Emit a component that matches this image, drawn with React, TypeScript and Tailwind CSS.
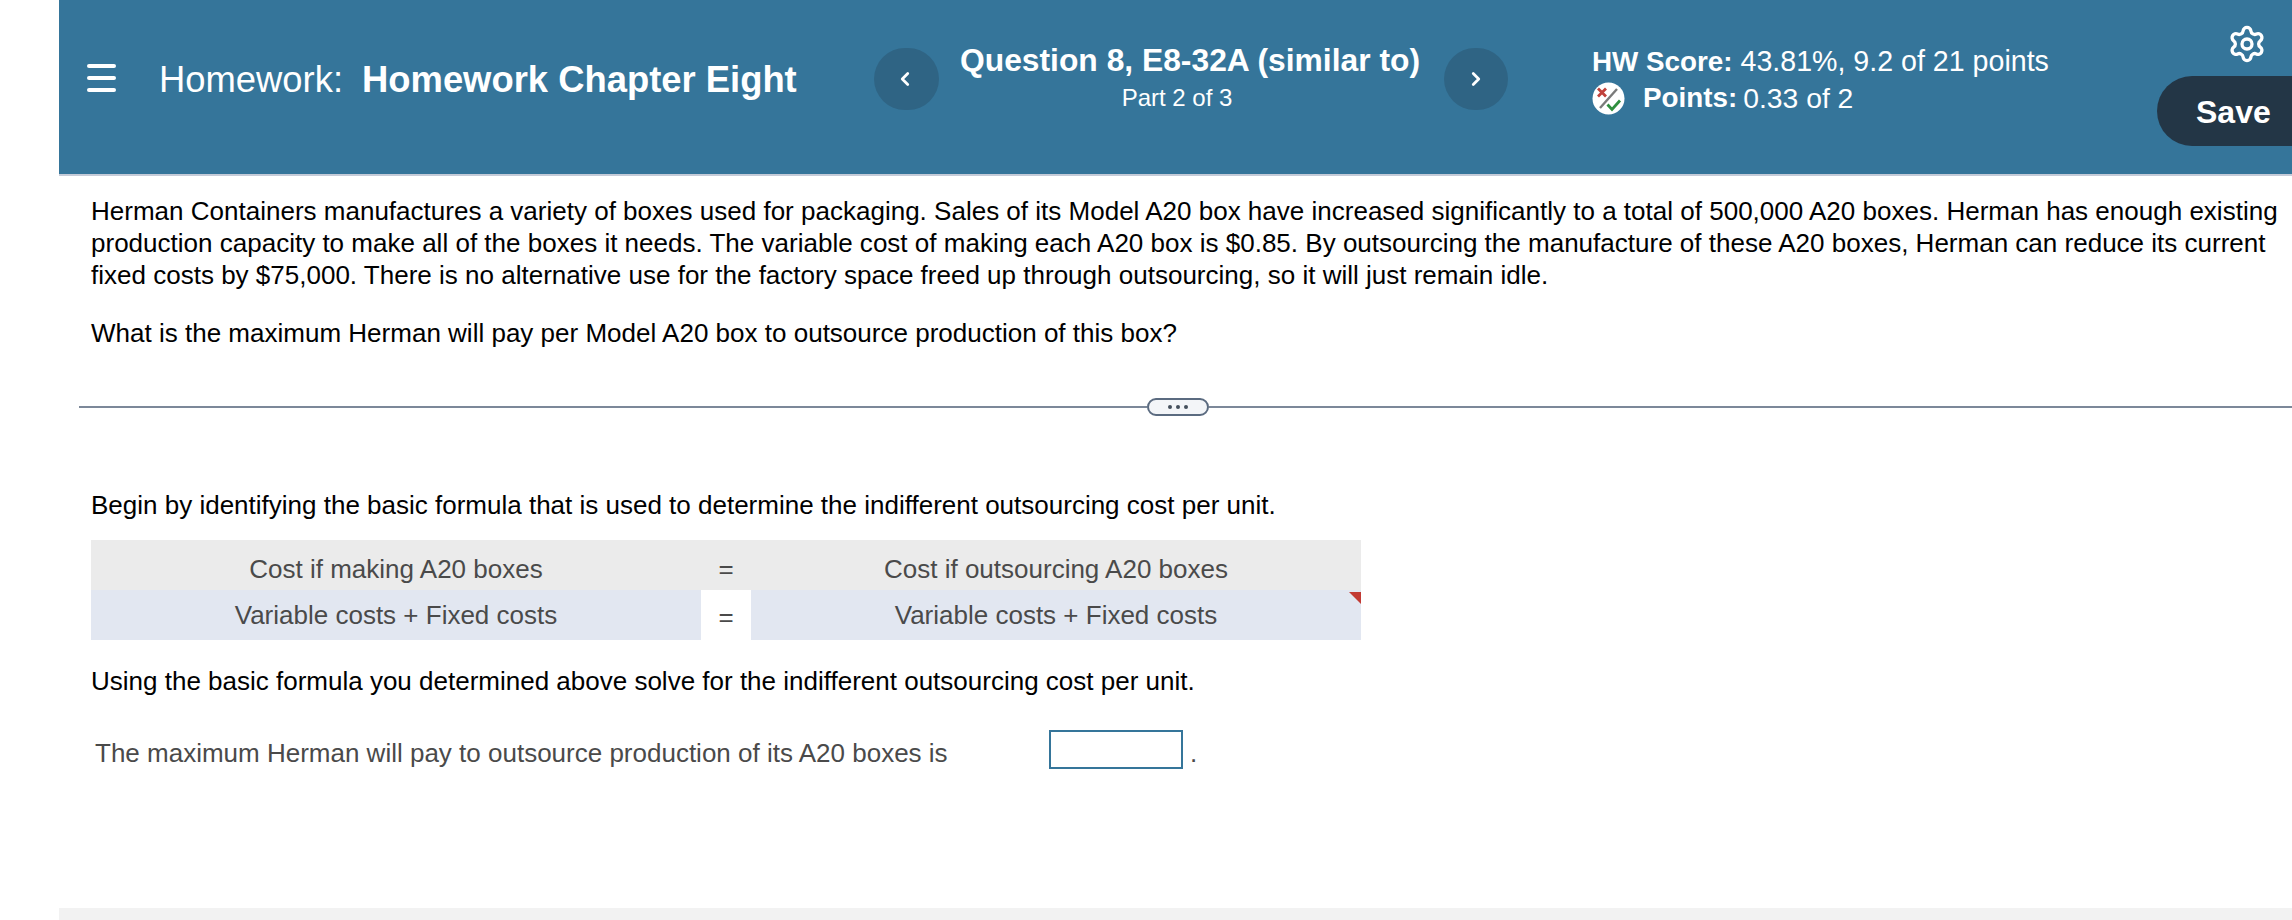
import { Settings, ChevronLeft, ChevronRight } from "lucide-react";

function ScoreIcon() {
  return (
    <svg width="33" height="33" viewBox="0 0 33 33" className="shrink-0">
      <circle cx="16.5" cy="16.5" r="16" fill="#ffffff" />
      <path d="M6 6.5l8 8M14 6.5l-8 8" stroke="#c0413b" strokeWidth="2.8" />
      <path d="M8 26L25 7" stroke="#7a7a7a" strokeWidth="2.4" />
      <path d="M15.5 22.5l4.5 5 8-9" stroke="#2f8f3e" strokeWidth="2.8" fill="none" />
    </svg>
  );
}

export default function App() {
  return (
    <div className="h-[920px] w-[2292px] overflow-hidden bg-white pl-[59px] font-['Liberation_Sans',Arial,sans-serif]">
      <div className="flex h-[920px] flex-col">
        {/* Header */}
        <header className="flex h-[176px] shrink-0 border-b-2 border-[#c5cbd8] bg-[#35759a] text-white">
          <div className="mt-[64px] flex h-[28px] w-[29px] ml-[28px] flex-col justify-between">
            <span className="h-[4px] rounded bg-white" />
            <span className="h-[4px] rounded bg-white" />
            <span className="h-[4px] rounded bg-white" />
          </div>
          <div className="ml-[43px] mt-[59px] h-[42px] w-[715px] text-[36.4px] leading-[42px]">
            Homework:<span className="ml-[19px] font-bold">Homework Chapter Eight</span>
          </div>
          <button className="mt-[48px] flex h-[62px] w-[65px] items-center justify-center rounded-full bg-[#2f6484]">
            <ChevronLeft size={22} strokeWidth={3} className="-ml-[3px]" />
          </button>
          <div className="mt-[40px] w-[505px] text-center">
            <div className="pr-[3px] text-[31.8px] font-bold leading-[40px]">Question 8, E8-32A (similar to)</div>
            <div className="mr-[29px] mt-[2px] text-[24px] leading-[32px]">Part 2 of 3</div>
          </div>
          <button className="mt-[48px] flex h-[62px] w-[64px] items-center justify-center rounded-full bg-[#2f6484]">
            <ChevronRight size={22} strokeWidth={3} />
          </button>
          <div className="ml-[84px] mt-[43px] w-[565px] text-[28.6px] leading-[36px]">
            <div>
              <span className="text-[27.8px] font-bold">HW Score:</span> 43.81%, 9.2 of 21 points
            </div>
            <div className="flex items-center">
              <ScoreIcon />
              <span className="ml-[18px] text-[27.8px] font-bold">Points:</span>
              <span className="ml-[6px] text-[28.3px]">0.33 of 2</span>
            </div>
          </div>
          <div className="flex flex-1 flex-col">
            <Settings size={40} strokeWidth={2} className="ml-[70px] mt-[24px] shrink-0" />
            <button className="mt-[12px] h-[70px] w-full rounded-l-[35px] bg-[#233646] pl-[39px] pt-[2px] text-left text-[32px] font-bold">
              Save
            </button>
          </div>
        </header>

        {/* Question text */}
        <div className="pl-[32px] pt-[19px] text-[26.03px] leading-[32px] text-black">
          <p className="whitespace-nowrap">
            Herman Containers manufactures a variety of boxes used for packaging. Sales of its Model A20 box have increased significantly to a total of 500,000 A20 boxes. Herman has enough existing
            <br />
            production capacity to make all of the boxes it needs. The variable cost of making each A20 box is $0.85. By outsourcing the manufacture of these A20 boxes, Herman can reduce its current
            <br />
            fixed costs by $75,000. There is no alternative use for the factory space freed up through outsourcing, so it will just remain idle.
          </p>
          <p className="mt-[26px]">What is the maximum Herman will pay per Model A20 box to outsource production of this box?</p>
        </div>

        {/* Divider */}
        <div className="ml-[20px] mt-[49px] flex h-[18px] items-center">
          <div className="h-[2px] w-[1068px] bg-[#7c8899]" />
          <div className="flex h-[18px] w-[62px] items-center justify-center gap-[4px] rounded-[9px] border-2 border-[#5b6b80] bg-[#f3f5f8]">
            <span className="h-[4px] w-[4px] rounded-full bg-[#444f5c]" />
            <span className="h-[4px] w-[4px] rounded-full bg-[#444f5c]" />
            <span className="h-[4px] w-[4px] rounded-full bg-[#444f5c]" />
          </div>
          <div className="h-[2px] flex-1 bg-[#7c8899]" />
        </div>

        {/* Formula */}
        <div className="pl-[32px] pt-[73px]">
          <p className="text-[26px] leading-[32px] text-black">
            Begin by identifying the basic formula that is used to determine the indifferent outsourcing cost per unit.
          </p>
          <div className="mt-[19px] w-[1270px] text-[26px] text-[#4a4a4a]">
            <div className="flex h-[50px] items-center bg-[#ebebeb] pt-[8px] text-center">
              <div className="w-[610px]">Cost if making A20 boxes</div>
              <div className="w-[50px]">=</div>
              <div className="flex-1">Cost if outsourcing A20 boxes</div>
            </div>
            <div className="flex h-[50px] text-center">
              <div className="flex w-[610px] items-center justify-center bg-[#e2e7f1]">Variable costs + Fixed costs</div>
              <div className="flex w-[50px] items-center justify-center pt-[4px]">=</div>
              <div className="relative flex flex-1 items-center justify-center bg-[#e2e7f1]">
                Variable costs + Fixed costs
                <span className="absolute right-0 top-[2px] h-0 w-0 border-l-[12px] border-t-[12px] border-l-transparent border-t-[#c23a34]" />
              </div>
            </div>
          </div>
          <p className="mt-[25px] text-[26px] leading-[32px] text-black">
            Using the basic formula you determined above solve for the indifferent outsourcing cost per unit.
          </p>
          <div className="mt-[33px] flex h-[39px] items-center text-[26px] text-[#4a4a4a]">
            <span className="ml-[4px] w-[954px] pt-[8px]">The maximum Herman will pay to outsource production of its A20 boxes is</span>
            <input type="text" className="h-[39px] w-[134px] border-2 border-[#35759a] bg-white outline-none" />
            <span className="ml-[7px] self-end leading-[32px]">.</span>
          </div>
        </div>

        {/* Footer strip */}
        <div className="mt-auto h-[12px] shrink-0 bg-[#f2f2f2]" />
      </div>
    </div>
  );
}
